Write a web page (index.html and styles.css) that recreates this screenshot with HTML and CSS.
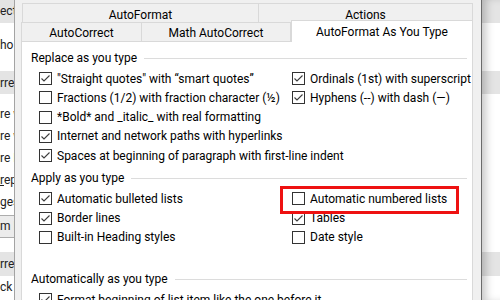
FILE: index.html
```html
<!DOCTYPE html>
<html lang="en">
<head>
    <meta charset="UTF-8">
    <title>AutoCorrect</title>
    <link rel="stylesheet" href="styles.css">
</head>
<body>
    <div class="screen">
        <!-- Word Options window behind the dialog -->
        <div class="backdrop-side left">
            <div class="bg-line head">ect</div>
            <div class="bg-line intro">ho</div>
            <div class="bg-line band">rre</div>
            <div class="bg-line gap"></div>
            <div class="bg-line item">re w</div>
            <div class="bg-line item">re w</div>
            <div class="bg-line item">re I</div>
            <div class="bg-line item"><u>r</u>ep</div>
            <div class="bg-line item">gest</div>
            <div class="bg-line button">m D</div>
            <div class="bg-line gap-lg"></div>
            <div class="bg-line band tall">rre</div>
            <div class="bg-line item">ck s</div>
        </div>

        <div class="dialog">
            <div class="tab-row upper">
                <div class="tab" style="width: 237px">AutoFormat</div>
                <div class="tab" style="width: 214px">Actions</div>
            </div>
            <div class="tab-row lower">
                <div class="tab" style="width: 121px">AutoCorrect</div>
                <div class="tab" style="width: 149px">Math AutoCorrect</div>
                <div class="tab active" style="width: 182px">AutoFormat As You Type</div>
            </div>

            <div class="panel">
                <section class="group">
                    <div class="group-title">Replace as you type</div>
                    <div class="options">
                        <div class="option"><span class="box checked"><svg viewBox="0 0 11 11"><path d="M1.5 5.5 L4 8 L9.5 2.5"/></svg></span>"Straight quotes" with “smart quotes”</div>
                        <div class="option"><span class="box checked"><svg viewBox="0 0 11 11"><path d="M1.5 5.5 L4 8 L9.5 2.5"/></svg></span>Ordinals (1st) with superscript</div>
                        <div class="option"><span class="box"></span>Fractions (1/2) with fraction character (½)</div>
                        <div class="option"><span class="box checked"><svg viewBox="0 0 11 11"><path d="M1.5 5.5 L4 8 L9.5 2.5"/></svg></span>Hyphens (--) with dash (—)</div>
                        <div class="option wide"><span class="box"></span>*Bold* and _italic_ with real formatting</div>
                        <div class="option wide"><span class="box checked"><svg viewBox="0 0 11 11"><path d="M1.5 5.5 L4 8 L9.5 2.5"/></svg></span>Internet and network paths with hyperlinks</div>
                        <div class="option wide"><span class="box checked"><svg viewBox="0 0 11 11"><path d="M1.5 5.5 L4 8 L9.5 2.5"/></svg></span>Spaces at beginning of paragraph with first-line indent</div>
                    </div>
                </section>

                <section class="group">
                    <div class="group-title">Apply as you type</div>
                    <div class="options spaced">
                        <div class="option"><span class="box checked"><svg viewBox="0 0 11 11"><path d="M1.5 5.5 L4 8 L9.5 2.5"/></svg></span>Automatic bulleted lists</div>
                        <div class="option marked"><span class="box"></span>Automatic numbered lists</div>
                        <div class="option"><span class="box checked"><svg viewBox="0 0 11 11"><path d="M1.5 5.5 L4 8 L9.5 2.5"/></svg></span>Border lines</div>
                        <div class="option"><span class="box checked"><svg viewBox="0 0 11 11"><path d="M1.5 5.5 L4 8 L9.5 2.5"/></svg></span>Tables</div>
                        <div class="option"><span class="box"></span>Built-in Heading styles</div>
                        <div class="option"><span class="box"></span>Date style</div>
                    </div>
                </section>

                <section class="group">
                    <div class="group-title">Automatically as you type</div>
                    <div class="options">
                        <div class="option wide"><span class="box checked"><svg viewBox="0 0 11 11"><path d="M1.5 5.5 L4 8 L9.5 2.5"/></svg></span>Format beginning of list item like the one before it</div>
                    </div>
                </section>
            </div>
        </div>

        <div class="backdrop-side right"></div>
    </div>
</body>
</html>
```

FILE: styles.css
```css
* {
    margin: 0;
    padding: 0;
    box-sizing: border-box;
}

body {
    width: 500px;
    height: 300px;
    overflow: hidden;
    font-family: Roboto, "Noto Sans", sans-serif;
    font-size: 12px;
    color: #000;
    background: #fff;
}

.screen {
    display: flex;
    height: 300px;
}

/* window behind the dialog */
.backdrop-side {
    overflow: hidden;
    white-space: nowrap;
    background: linear-gradient(to bottom,
        #e4e4e4 0 23px, #fff 23px 71px,
        #e4e4e4 71px 94px, #fff 94px 252px,
        #e4e4e4 252px 276px, #fff 276px);
}

.backdrop-side.left {
    width: 14px;
    color: #222;
}

.backdrop-side.right {
    flex: 1;
    box-shadow: inset 7px 0 8px -3px rgba(0, 0, 0, 0.22);
}

.bg-line {
    height: 22px;
    line-height: 22px;
}

.bg-line.head { height: 23px; line-height: 23px; }
.bg-line.intro { height: 49px; padding-top: 14px; line-height: 16px; }
.bg-line.band { height: 22px; }
.bg-line.gap { height: 9px; }
.bg-line.button {
    height: 23px;
    margin-top: 2px;
    border-top: 1px solid #adadad;
    border-bottom: 1px solid #adadad;
    background: #ececec;
    line-height: 21px;
}
.bg-line.gap-lg { height: 14px; }
.bg-line.tall { height: 24px; line-height: 24px; }

/* dialog */
.dialog {
    width: 468px;
    display: flex;
    flex-direction: column;
    padding: 3px 8px 0 6px;
    background: #f0f0f0;
    border-left: 1px solid #a3a3a3;
    border-right: 1px solid #6b6b6b;
}

.tab-row {
    display: flex;
    height: 19px;
}

.tab-row.upper {
    margin-left: 1px;
}

.tab {
    flex: none;
    height: 100%;
    padding-top: 1px;
    border: 1px solid #d9d9d9;
    border-bottom: none;
    text-align: center;
    line-height: 18px;
    background: #f0f0f0;
    white-space: nowrap;
}

.upper .tab {
    padding-top: 2px;
}

.tab + .tab {
    border-left: none;
}

.tab.active {
    height: 22px;
    margin-top: -2px;
    padding-top: 1px;
    border-left: 1px solid #d9d9d9;
    background: #fff;
    line-height: 20px;
    position: relative;
    z-index: 1;
}

.panel {
    flex: 1;
    background: #fff;
    border: 1px solid #d9d9d9;
    padding: 8px 5px 0 9px;
}

.group-title {
    display: flex;
    align-items: center;
    height: 16px;
    line-height: 16px;
    white-space: nowrap;
}

.group-title::after {
    content: "";
    flex: 1;
    height: 1px;
    margin-left: 7px;
    background: #dcdcdc;
}

.options {
    display: grid;
    grid-template-columns: 253px 1fr;
    grid-auto-rows: 19.25px;
    padding-left: 8px;
    margin: 3px 0 5px;
}

.options.spaced {
    margin-bottom: 24px;
}

.option {
    display: flex;
    align-items: center;
    gap: 5px;
    white-space: nowrap;
}

.option.wide {
    grid-column: 1 / -1;
}

.box {
    flex: none;
    display: flex;
    width: 13px;
    height: 13px;
    border: 1px solid #333;
    background: #fff;
}

.box svg {
    width: 11px;
    height: 11px;
    fill: none;
    stroke: #3c3c3c;
    stroke-width: 1.1;
}

/* highlight drawn over the screenshot */
.marked {
    position: relative;
}

.marked::after {
    content: "";
    position: absolute;
    left: -12px;
    top: -3px;
    width: 173px;
    height: 22px;
    border: 3px solid #ee1111;
}
```
